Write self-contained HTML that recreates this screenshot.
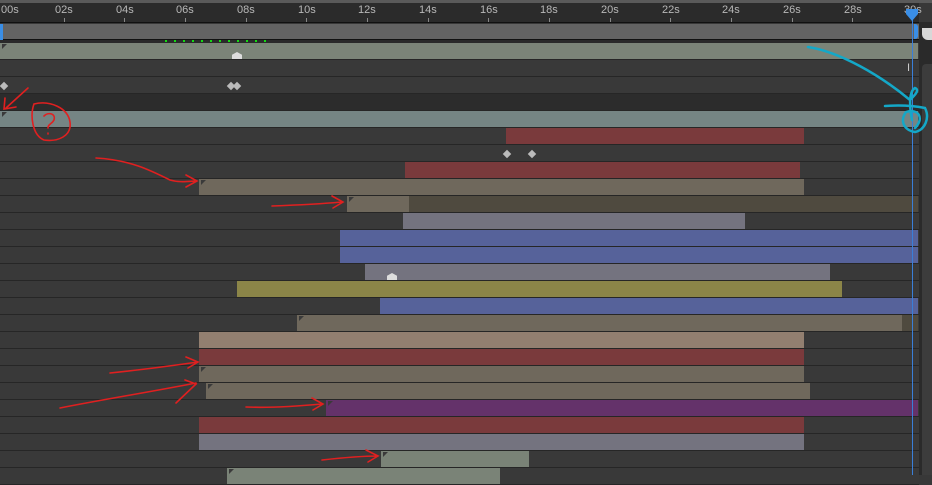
<!DOCTYPE html><html><head><style>
body{margin:0;width:932px;height:475px;overflow:hidden;background:#383838;position:relative;font-family:"Liberation Sans",sans-serif}
div{position:absolute;box-sizing:border-box}
.row{left:0;width:919px;height:17px;background:#393939;border-bottom:1px solid #262626}
.b{height:16px}
.lbl{top:4px;font-size:11px;color:#b8b8b8}
.tk{top:18px;width:1px;height:4px;background:#888}
.c{width:0;height:0;border-top:5px solid #3a3a3a;border-right:5px solid transparent}
</style></head><body>
<div style="left:0;top:0;width:932px;height:3px;background:#5a5a5a"></div>
<div style="left:0;top:3px;width:919px;height:20px;background:#2b2b2b;border-bottom:1px solid #111"></div>
<div class="lbl" style="left:1px">00s</div><div class="lbl" style="left:55px">02s</div><div class="lbl" style="left:116px">04s</div><div class="lbl" style="left:176px">06s</div><div class="lbl" style="left:237px">08s</div><div class="lbl" style="left:298px">10s</div><div class="lbl" style="left:358px">12s</div><div class="lbl" style="left:419px">14s</div><div class="lbl" style="left:480px">16s</div><div class="lbl" style="left:540px">18s</div><div class="lbl" style="left:601px">20s</div><div class="lbl" style="left:662px">22s</div><div class="lbl" style="left:722px">24s</div><div class="lbl" style="left:783px">26s</div><div class="lbl" style="left:844px">28s</div><div class="lbl" style="left:904px">30s</div>
<div class="tk" style="left:64px"></div><div class="tk" style="left:124px"></div><div class="tk" style="left:185px"></div><div class="tk" style="left:246px"></div><div class="tk" style="left:306px"></div><div class="tk" style="left:367px"></div><div class="tk" style="left:428px"></div><div class="tk" style="left:488px"></div><div class="tk" style="left:549px"></div><div class="tk" style="left:610px"></div><div class="tk" style="left:670px"></div><div class="tk" style="left:731px"></div><div class="tk" style="left:792px"></div><div class="tk" style="left:852px"></div>
<div style="left:0;top:24px;width:919px;height:16px;background:#636363;border-bottom:1px solid #111"></div>
<div style="left:0;top:24px;width:3px;height:16px;background:#3a8ee6"></div>
<div style="left:914px;top:24px;width:4px;height:15px;background:#3a8ee6;border-radius:0 3px 3px 0"></div>
<div style="left:0;top:40px;width:919px;height:3px;background:#2a2a2a"></div>
<div style="left:165px;top:40px;width:106px;height:2px;background:repeating-linear-gradient(90deg,#1d1 0 2px,transparent 2px 9px)"></div>
<div id="rows"></div>
<div style="left:919px;top:22px;width:13px;height:453px;background:#2a2a2a"></div>
<div style="left:922px;top:64px;width:10px;height:411px;background:#3c3c3c;border-radius:4px 0 0 0"></div>
<div style="left:922px;top:28px;width:10px;height:12px;background:#d8d8d8;border-radius:0 0 0 6px"></div>
<div style="left:912px;top:10px;width:1px;height:465px;background:#3a7fd8"></div>
<svg style="position:absolute;left:905px;top:8px" width="16" height="14"><path d="M1 1H13V6L7 13L1 6Z" fill="#3a8ee6"/></svg>
<div style="left:907px;top:62px;font-size:11px;color:#ccc">I</div>
<svg style="position:absolute;left:0;top:0" width="932" height="475" fill="none">
<g stroke="#e02020" stroke-width="1.6" stroke-linecap="round">
<path d="M28 88L6 108M5 98L4 109L16 107"/>
<path d="M34 104C30 115 32 135 44 140C58 142 72 136 70 122C68 108 50 100 34 104"/>
<path d="M44 116C48 112 56 113 54 120C52 124 48 124 48 128M48 133L48 134"/>
<path d="M96 158C130 160 150 170 170 180C180 183 190 181 196 181M186 175L197 181L186 187"/>
<path d="M272 206C300 205 320 204 342 202M332 196L343 202L333 208"/>
<path d="M110 373C140 370 170 366 198 362M186 357L198 362L188 368"/>
<path d="M60 408C100 400 150 392 196 383M176 403L196 384L185 380"/>
<path d="M246 407C270 408 300 406 322 404M312 398L323 404L313 410"/>
<path d="M322 460C340 458 360 456 378 456M366 450L378 456L368 462"/>
</g>
<g stroke="#14a8c8" stroke-width="2.5" stroke-linecap="round">
<path d="M808 47C840 52 880 75 910 100C915 95 920 90 915 88C908 92 910 110 912 120"/>
<path d="M885 106C900 105 915 106 925 108C930 118 925 130 915 132C903 130 900 120 906 112C918 108 925 118 915 128"/>
</g>
</svg>
<script>
var R=document.getElementById('rows'),h='';
var rows=[
[[0,918,'#7b8478',1]],[],[],[],[[0,918,'#758584',1]],
[[506,804,'#7a3a3c']],[],[[405,800,'#7a3a3c']],[[199,804,'#6f685c',1]],
[[347,409,'#6f685c',1],[409,918,'#4f4a3f']],[[403,745,'#74737f']],[[340,918,'#56629a']],[[340,918,'#56629a']],
[[365,830,'#74737f']],[[237,842,'#8b8548']],[[380,918,'#56629a']],[[297,902,'#6f685c',1],[902,918,'#4f4a3f']],
[[199,804,'#927f70']],[[199,804,'#7a3a3c']],[[199,804,'#6f685c',1]],[[206,810,'#6f685c',1]],[[326,918,'#64326a',1]],
[[199,804,'#7a3a3c']],[[199,804,'#74737f']],[[381,529,'#7a8377',1]],[[227,500,'#7a8377',1]]];
for(var i=0;i<rows.length;i++){var y=43+i*17;var bg=(i==3)?'#2c2c2c':'#393939';
h+='<div class="row" style="top:'+y+'px;background:'+bg+'"></div>';
rows[i].forEach(function(b){h+='<div class="b" style="top:'+y+'px;left:'+b[0]+'px;width:'+(b[1]-b[0])+'px;background:'+b[2]+'"></div>';
if(b[3])h+='<div class="c" style="left:'+(b[0]+2)+'px;top:'+(y+1)+'px"></div>';});}
h+='<div style="left:232px;top:52px;width:10px;height:7px;background:#ddd;clip-path:polygon(0 40%,50% 0,100% 40%,100% 100%,0 100%)"></div>';
h+='<div style="left:387px;top:273px;width:10px;height:7px;background:#ddd;clip-path:polygon(0 40%,50% 0,100% 40%,100% 100%,0 100%)"></div>';
[[4,86],[231,86],[237,86],[507,154],[532,154]].forEach(function(k){h+='<div style="left:'+(k[0]-3)+'px;top:'+(k[1]-3)+'px;width:6px;height:6px;background:#bbb;transform:rotate(45deg)"></div>';});
R.outerHTML=h;
</script>
</body></html>
